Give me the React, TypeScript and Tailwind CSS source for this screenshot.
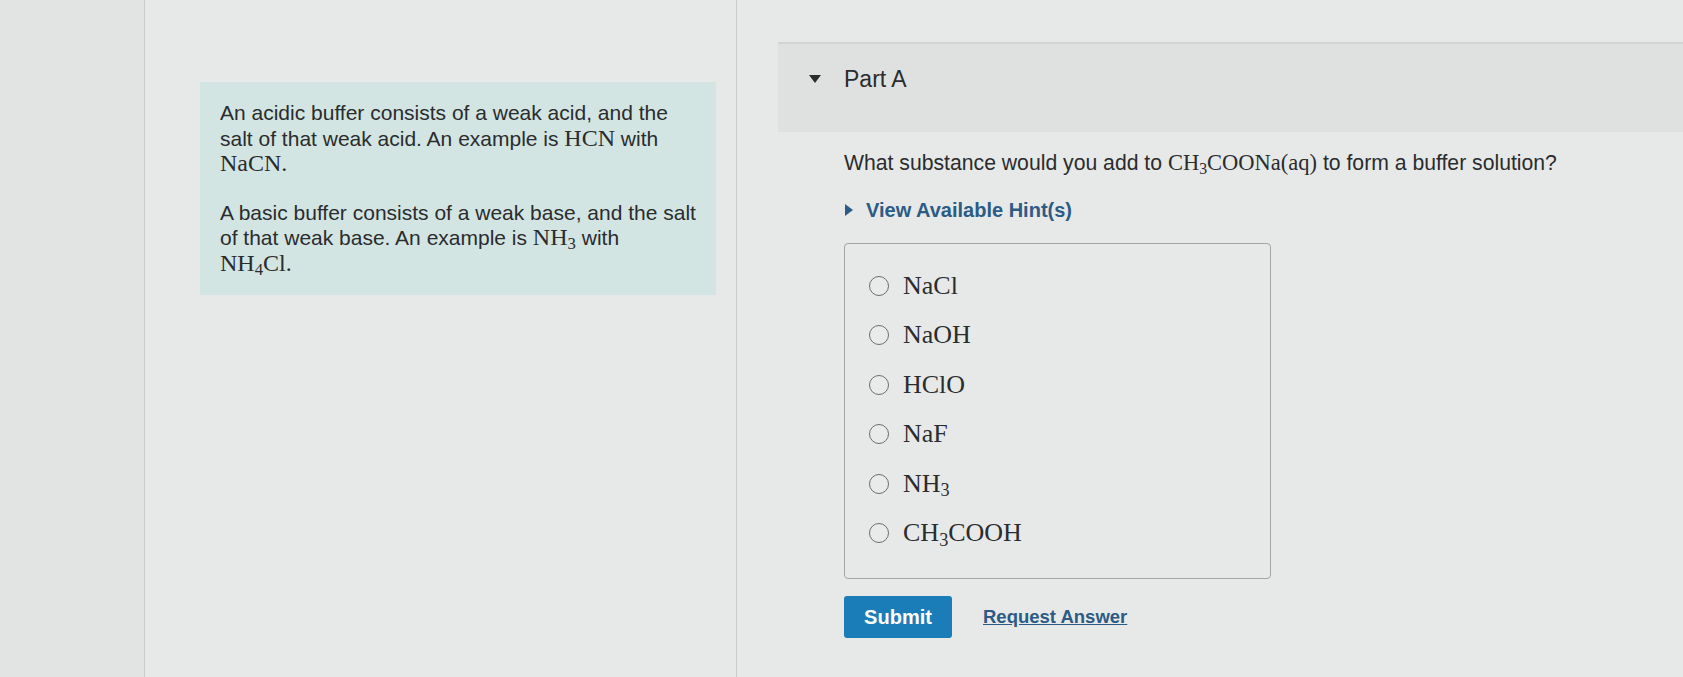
import React from "react";

const serif = { fontFamily: '"Liberation Serif", "Times New Roman", serif' };

function M({ children, size }: { children: React.ReactNode; size: string }) {
  return (
    <span className={size} style={serif}>
      {children}
    </span>
  );
}

function Sub({ children }: { children: React.ReactNode }) {
  return <sub className="text-[0.7em]">{children}</sub>;
}

function Radio() {
  return <span className="inline-block h-[20px] w-[20px] shrink-0 rounded-full border-[1.5px] border-[#6c6e70] bg-[#e9ebea]" />;
}

const options: React.ReactNode[] = [
  <>NaCl</>,
  <>NaOH</>,
  <>HClO</>,
  <>NaF</>,
  <>
    NH<Sub>3</Sub>
  </>,
  <>
    CH<Sub>3</Sub>COOH
  </>,
];

export default function App() {
  return (
    <div
      className="flex h-[677px] w-[1683px] overflow-hidden bg-[#e6e8e7] text-[#2a2c2e]"
      style={{ fontFamily: '"Liberation Sans", Arial, sans-serif' }}
    >
      <div className="w-[145px] shrink-0 border-r border-[#c9cbcb] bg-[#e2e4e3]" />
      <div className="w-[592px] shrink-0 border-r border-[#c9cbcb] bg-[#e7e9e8] pl-[55px] pt-[82px]">
        <div className="h-[213px] w-[516px] bg-[#d3e5e2] px-[20px] pt-[19px] text-[21px] leading-[24.5px]">
          <p>
            An acidic buffer consists of a weak acid, and the salt of that weak acid. An example is{" "}
            <M size="text-[24px]">HCN</M> with <M size="text-[24px]">NaCN.</M>
          </p>
          <p className="mt-[24px]">
            A basic buffer consists of a weak base, and the salt of that weak base. An example is{" "}
            <M size="text-[24px]">
              NH<Sub>3</Sub>
            </M>{" "}
            with{" "}
            <M size="text-[24px]">
              NH<Sub>4</Sub>Cl.
            </M>
          </p>
        </div>
      </div>
      <div className="flex-1 bg-[#e7e9e8] pt-[42px]">
        <div className="ml-[41px] flex h-[90px] items-center border-t-2 border-[#d2d4d4] bg-[#dfe1e1] pb-[18px] pl-[30px]">
          <svg width="14" height="10" viewBox="0 0 14 10" className="mr-[22px]">
            <polygon points="1,1 13,1 7,9" fill="#2a2c2e" />
          </svg>
          <span className="text-[23px]">Part A</span>
        </div>
        <div className="pl-[107px]">
          <p className="mt-[14px] text-[21.2px]">
            What substance would you add to{" "}
            <M size="text-[22.5px]">
              CH<Sub>3</Sub>COONa(aq)
            </M>{" "}
            to form a buffer solution?
          </p>
          <div className="mt-[15px] flex items-center text-[20px] font-bold text-[#2c5b86]">
            <svg width="10" height="14" viewBox="0 0 10 14" className="mr-[12px]">
              <polygon points="1,1 9,7 1,13" fill="#2c5b86" />
            </svg>
            View Available Hint(s)
          </div>
          <div className="mt-[18px] h-[336px] w-[427px] rounded-[4px] border-[1.5px] border-[#a3a5a6] pl-[24px] pt-[21px]">
            {options.map((o, i) => (
              <div key={i} className="flex h-[49.5px] items-center gap-[14px] pb-[8px]">
                <Radio />
                <span className="text-[26px] leading-none" style={serif}>
                  {o}
                </span>
              </div>
            ))}
          </div>
          <div className="mt-[17px] flex items-center">
            <button className="h-[42px] w-[108px] rounded-[3px] bg-[#1b7db7] text-[20px] font-bold text-white">
              Submit
            </button>
            <span className="ml-[31px] text-[18.5px] font-bold text-[#2c5b86] underline">Request Answer</span>
          </div>
        </div>
      </div>
    </div>
  );
}
